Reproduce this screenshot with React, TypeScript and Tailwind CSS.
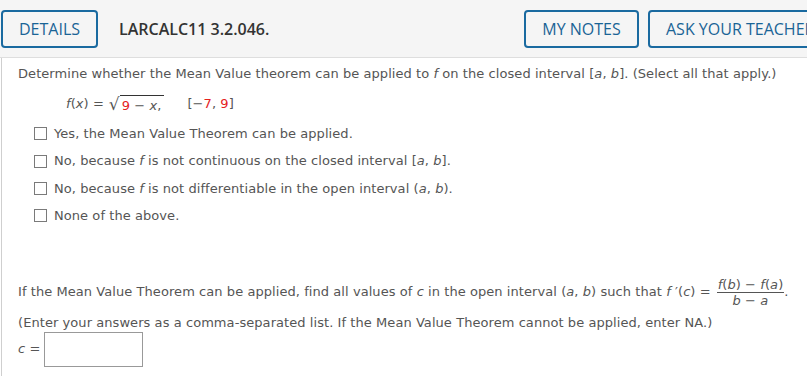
import React from "react";

const red = "text-[#e5211d]";

function Box() {
  return <span className="inline-block h-[13px] w-[13px] shrink-0 border border-[#7a7a7a] bg-white" />;
}

function Choice({ children }: { children: React.ReactNode }) {
  return (
    <div className="flex h-[27.4px] items-center gap-[7px] pl-[16px]">
      <Box />
      <span>{children}</span>
    </div>
  );
}

export default function App() {
  return (
    <div className="h-[376px] w-[807px] overflow-hidden bg-white">
      <div className="flex h-[58px] items-center border-b border-[#dedede] bg-[#f5f5f5] font-['Open_Sans',sans-serif]">
        <button className="ml-px h-[38px] w-[97px] shrink-0 rounded-[4px] border-2 border-[#1a6aa0] text-[16px] text-[#1a6496]">
          DETAILS
        </button>
        <div className="ml-[21px] text-[16px] font-semibold text-[#333]">LARCALC11 3.2.046.</div>
        <div className="ml-auto flex shrink-0 gap-[9px] whitespace-nowrap">
          <button className="h-[38px] w-[115px] rounded-[4px] border-2 border-[#1a6aa0] text-[16px] text-[#1a6496]">
            MY NOTES
          </button>
          <button className="-mr-[30px] h-[38px] w-[189px] rounded-[4px] border-2 border-[#1a6aa0] pl-[16px] text-left text-[16px] text-[#1a6496]">
            ASK YOUR TEACHER
          </button>
        </div>
      </div>
      <div className="ml-px h-[318px] border-l border-[#cfcfcf] pl-[16px] pt-[6px] font-['DejaVu_Sans',Verdana,sans-serif] text-[13px] tracking-[0.065px] text-[#555]">
        <div className="leading-[20px]">
          Determine whether the Mean Value theorem can be applied to <i>f</i> on the closed interval [<i>a</i>, <i>b</i>]. (Select all that apply.)
        </div>
        <div className="mt-[8px] flex h-[24px] items-center pl-[48px]">
          <span><i>f</i>(<i>x</i>) = </span>
          <span className="ml-[5px] text-[17px] leading-none">√</span>
          <span className="mt-[2px] border-t border-[#333] pl-[2px] pr-[3px]">
            <span className={red}>9</span> − <i>x</i>,
          </span>
          <span className="ml-[23px]">
            [−<span className={red}>7</span>, <span className={red}>9</span>]
          </span>
        </div>
        <div className="mt-[4px]">
          <Choice>Yes, the Mean Value Theorem can be applied.</Choice>
          <Choice>
            No, because <i>f</i> is not continuous on the closed interval [<i>a</i>, <i>b</i>].
          </Choice>
          <Choice>
            No, because <i>f</i> is not differentiable in the open interval (<i>a</i>, <i>b</i>).
          </Choice>
          <Choice>None of the above.</Choice>
        </div>
        <div className="mt-[47px] flex items-center">
          <span>
            If the Mean Value Theorem can be applied, find all values of <i>c</i> in the open interval (<i>a</i>, <i>b</i>) such that <i>f</i> ′(<i>c</i>) ={" "}
          </span>
          <span className="ml-[6px] inline-flex flex-col items-center leading-[15px]">
            <span className="px-[1px]">
              <i>f</i>(<i>b</i>) − <i>f</i>(<i>a</i>)
            </span>
            <span className="w-full border-t border-[#555]" />
            <span>
              <i>b</i> − <i>a</i>
            </span>
          </span>
          <span>.</span>
        </div>
        <div className="mt-[5px] leading-[20px]">
          (Enter your answers as a comma-separated list. If the Mean Value Theorem cannot be applied, enter NA.)
        </div>
        <div className="-mt-px flex items-center">
          <span className="w-[26px]">
            <i>c</i> =
          </span>
          <span className="h-[35px] w-[99px] border border-[#999] bg-white" />
        </div>
      </div>
    </div>
  );
}
